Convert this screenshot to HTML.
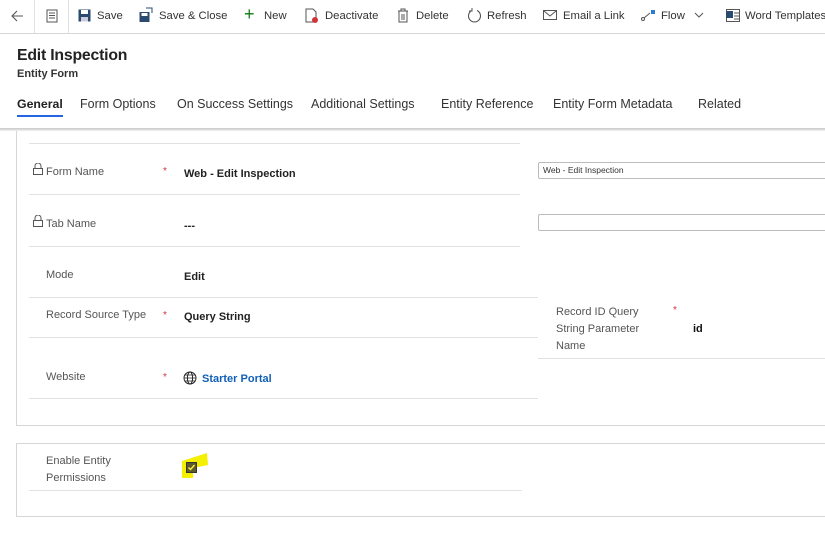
<!DOCTYPE html>
<html><head><meta charset="utf-8"><style>
*{margin:0;padding:0;box-sizing:border-box}
body{width:825px;height:540px;overflow:hidden;background:#fff;font-family:"Liberation Sans",sans-serif;color:#333;position:relative}
.a{position:absolute;white-space:nowrap}
.tb{font-size:11.3px;color:#333;top:10px}
.lbl{font-size:11px;color:#555;margin-top:2px}
.val{font-size:11px;font-weight:bold;color:#222;margin-top:2px}
.hl{position:absolute;height:1px;background:#e1e1e1}
.req{color:#d13438;font-size:10px}
.tab{font-size:12.5px;color:#333;top:97px}
</style></head><body>
<div class="hl" style="left:0;top:33px;width:825px;background:#d6d6d6"></div>
<div class="a" style="left:34px;top:0;width:1px;height:33px;background:#e1e1e1"></div>
<div class="a" style="left:68px;top:0;width:1px;height:33px;background:#e1e1e1"></div>
<svg class="a" style="left:10px;top:9px" width="14" height="14"><path d="M13 7H2M7 2L2 7l5 5" stroke="#555" fill="none" stroke-width="1.1"/></svg>
<svg class="a" style="left:46px;top:9px" width="12" height="14"><rect x="1" y="1" width="10" height="12" stroke="#555" fill="none"/><path d="M3 4h6M3 6.5h6M3 9h6" stroke="#555"/></svg>
<svg class="a" style="left:78px;top:9px" width="13" height="13"><rect x="0.5" y="0.5" width="12" height="12" fill="#2b4a6f"/><rect x="3" y="1" width="7" height="4" fill="#fff"/><rect x="3" y="8" width="7" height="4.5" fill="#ccd"/></svg>
<div class="a tb" style="left:97px">Save</div>
<svg class="a" style="left:139px;top:7px" width="14" height="16"><rect x="0.5" y="5" width="10" height="10" fill="#2b4a6f"/><rect x="2.5" y="6" width="6" height="3" fill="#fff"/><path d="M7 1h6v5" stroke="#2b4a6f" fill="none"/></svg>
<div class="a tb" style="left:159px">Save &amp; Close</div>
<div class="a" style="left:244px;top:4px;font-size:18px;color:#107c10;font-weight:300">+</div>
<div class="a tb" style="left:264px">New</div>
<svg class="a" style="left:305px;top:8px" width="14" height="16"><path d="M1 1h7l3 3v10H1z" stroke="#555" fill="none"/><circle cx="10" cy="12" r="3" fill="#d13438"/></svg>
<div class="a tb" style="left:325px">Deactivate</div>
<svg class="a" style="left:397px;top:8px" width="12" height="15"><path d="M1 3h10M4 3V1h4v2M2 3v11h8V3M5 6v6M7 6v6" stroke="#555" fill="none"/></svg>
<div class="a tb" style="left:416px">Delete</div>
<svg class="a" style="left:467px;top:8px" width="15" height="15"><path d="M5 2.5A6 6 0 1 0 10 2.5" stroke="#555" fill="none" stroke-width="1.1"/><path d="M5 0v3h-3" stroke="#555" fill="none"/></svg>
<div class="a tb" style="left:487px">Refresh</div>
<svg class="a" style="left:543px;top:10px" width="15" height="12"><rect x="0.5" y="0.5" width="13" height="9" stroke="#555" fill="none"/><path d="M1 1l6 5 6-5" stroke="#555" fill="none"/></svg>
<div class="a tb" style="left:563px">Email a Link</div>
<svg class="a" style="left:641px;top:9px" width="15" height="12"><circle cx="2" cy="10" r="1.5" stroke="#555" fill="none"/><path d="M3 9l6-5" stroke="#555"/><rect x="10" y="1" width="4" height="4" fill="#2b7bd1"/></svg>
<div class="a tb" style="left:661px">Flow</div>
<svg class="a" style="left:694px;top:12px" width="10" height="6"><path d="M1 1l4 4 4-4" stroke="#555" fill="none"/></svg>
<svg class="a" style="left:726px;top:9px" width="14" height="13"><rect x="0.5" y="0.5" width="13" height="12" stroke="#555" fill="none"/><rect x="0" y="2" width="7" height="7" fill="#2b4a6f"/><path d="M8 4h5M8 7h5M8 10h5" stroke="#555"/></svg>
<div class="a tb" style="left:745px">Word Templates</div>
<div class="a" style="left:17px;top:47px;font-size:15.8px;color:#222;font-weight:bold;letter-spacing:-0.2px">Edit Inspection</div>
<div class="a" style="left:17px;top:68px;font-size:11px;color:#333;font-weight:bold">Entity Form</div>
<div class="a tab" style="left:17px;color:#222;font-weight:bold;font-size:12.3px">General</div>
<div class="a" style="left:17px;top:115px;width:46px;height:2px;background:#2266e3"></div>
<div class="a tab" style="left:80px">Form Options</div>
<div class="a tab" style="left:177px">On Success Settings</div>
<div class="a tab" style="left:311px">Additional Settings</div>
<div class="a tab" style="left:441px">Entity Reference</div>
<div class="a tab" style="left:553px">Entity Form Metadata</div>
<div class="a tab" style="left:698px">Related</div>
<div class="a" style="left:0;top:128px;width:825px;height:3px;background:linear-gradient(#c8c8c8,#f0f0f0)"></div>
<div class="a" style="left:16px;top:131px;width:1px;height:295px;background:#d6d6d6"></div>
<div class="hl" style="left:16px;top:425px;width:809px;background:#d6d6d6"></div>
<div class="hl" style="left:29px;top:143px;width:491px"></div>
<div class="hl" style="left:29px;top:194px;width:491px"></div>
<div class="hl" style="left:29px;top:246px;width:491px"></div>
<div class="hl" style="left:29px;top:297px;width:509px"></div>
<div class="hl" style="left:29px;top:337px;width:509px"></div>
<div class="hl" style="left:29px;top:398px;width:509px"></div>
<div class="hl" style="left:538px;top:358px;width:287px"></div>
<svg class="a" style="left:33px;top:163px" width="10" height="12"><path d="M2 5V3a3 3 0 0 1 6 0v2" stroke="#555" fill="none"/><rect x="0.5" y="5.5" width="9" height="6" stroke="#555" fill="none"/></svg>
<div class="a lbl" style="left:46px;top:164px">Form Name</div>
<div class="a req" style="left:163px;top:166px">*</div>
<div class="a val" style="left:184px;top:166px">Web - Edit Inspection</div>
<svg class="a" style="left:33px;top:215px" width="10" height="12"><path d="M2 5V3a3 3 0 0 1 6 0v2" stroke="#555" fill="none"/><rect x="0.5" y="5.5" width="9" height="6" stroke="#555" fill="none"/></svg>
<div class="a lbl" style="left:46px;top:216px">Tab Name</div>
<div class="a val" style="left:184px;top:218px">---</div>
<div class="a lbl" style="left:46px;top:267px">Mode</div>
<div class="a val" style="left:184px;top:269px">Edit</div>
<div class="a lbl" style="left:46px;top:307px">Record Source Type</div>
<div class="a req" style="left:163px;top:310px">*</div>
<div class="a val" style="left:184px;top:309px">Query String</div>
<div class="a lbl" style="left:46px;top:369px">Website</div>
<div class="a req" style="left:163px;top:372px">*</div>
<svg class="a" style="left:183px;top:371px" width="14" height="14"><circle cx="7" cy="7" r="6" stroke="#222" fill="none"/><ellipse cx="7" cy="7" rx="2.6" ry="6" stroke="#222" fill="none"/><path d="M1 7h12M2 4h10M2 10h10" stroke="#222" stroke-width="0.8"/></svg>
<div class="a val" style="left:202px;top:371px;color:#1160b7">Starter Portal</div>
<div class="a" style="left:538px;top:162px;width:290px;height:17px;border:1px solid #bbb;border-radius:2px;font-size:8.5px;color:#333;padding:2px 4px">Web - Edit Inspection</div>
<div class="a" style="left:538px;top:214px;width:290px;height:17px;border:1px solid #bbb;border-radius:2px"></div>
<div class="a lbl" style="left:556px;top:302px;line-height:17px;white-space:normal;width:110px">Record ID Query String Parameter Name</div>
<div class="a req" style="left:673px;top:305px">*</div>
<div class="a val" style="left:693px;top:321px;color:#111">id</div>
<div class="a" style="left:16px;top:443px;width:820px;height:74px;border:1px solid #d6d6d6"></div>
<div class="hl" style="left:29px;top:490px;width:493px"></div>
<div class="a lbl" style="left:46px;top:451px;line-height:17px">Enable Entity<br>Permissions</div>
<svg class="a" style="left:181px;top:451px" width="30" height="30"><path d="M1 10L26 2l1 12-15 3v10H1z" fill="#f4f000"/><rect x="5.5" y="11.5" width="10" height="10" fill="#5a5a2a" stroke="#333"/><path d="M7.5 16.5l2 2 4-4.5" stroke="#ffef40" fill="none" stroke-width="1.4"/></svg>
</body></html>
